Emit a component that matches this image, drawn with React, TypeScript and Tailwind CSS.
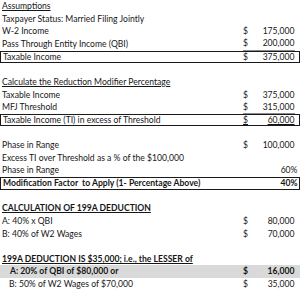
import React from "react";

type Row = {
  label?: string;
  dollar?: boolean;
  value?: string;
  pct?: boolean;
  bold?: boolean;
  underline?: boolean;
  boxed?: boolean;
  ruled?: boolean;
  textUnderline?: boolean;
  shaded?: boolean;
  indent?: string;
};

const rows: Row[] = [
  { label: "Assumptions", underline: true },
  { label: "Taxpayer Status: Married Filing Jointly" },
  { label: "W-2 Income", dollar: true, value: "175,000" },
  { label: "Pass Through Entity Income (QBI)", dollar: true, value: "200,000", ruled: true },
  { label: "Taxable Income", dollar: true, value: "375,000", boxed: true },
  {},
  { label: "Calculate the Reduction Modifier Percentage", underline: true },
  { label: "Taxable Income", dollar: true, value: "375,000" },
  { label: "MFJ Threshold", dollar: true, value: "315,000", ruled: true },
  { label: "Taxable Income (TI) in excess of Threshold", dollar: true, value: "60,000", boxed: true, textUnderline: true },
  {},
  { label: "Phase in Range", dollar: true, value: "100,000" },
  { label: "Excess TI over Threshold as a % of the $100,000" },
  { label: "Phase in Range", value: "60%", pct: true },
  { label: "Modification Factor  to Apply (1- Percentage Above)", value: "40%", pct: true, bold: true, boxed: true },
  {},
  { label: "CALCULATION OF 199A DEDUCTION", bold: true, underline: true },
  { label: "A: 40% x QBI", dollar: true, value: "80,000" },
  { label: "B: 40% of W2 Wages", dollar: true, value: "70,000" },
  {},
  { label: "199A DEDUCTION IS $35,000; i.e., the LESSER of", bold: true, underline: true },
  { label: "A: 20% of QBI of $80,000 or", dollar: true, value: "16,000", bold: true, shaded: true, indent: "pl-[10px]" },
  { label: "B: 50% of W2 Wages of $70,000", dollar: true, value: "35,000", indent: "pl-[9px]" },
];

function SheetRow({ r }: { r: Row }) {
  const base = "flex h-[12.65px] items-center whitespace-pre leading-none";
  const box = r.boxed ? " border border-[#1a1a1a]" : "";
  const shade = r.shaded ? " bg-[#d9d9d9]" : "";
  const weight = r.bold ? " font-bold" : "";
  const ul = r.textUnderline ? "underline underline-offset-[0.5px]" : "";
  return (
    <div className={base + box + shade + weight}>
      <span className={(r.indent ?? "pl-[2px]") + " flex-1" + (r.underline ? " underline underline-offset-1" : "")}>
        {r.label}
      </span>
      {r.pct ? (
        <span className={r.boxed ? "pr-[1.5px]" : "pr-[2.5px]"}>{r.value}</span>
      ) : r.value ? (
        <div
          className={
            "flex h-full w-[51.5px] items-center justify-between" +
            (r.boxed ? " mr-[4.5px]" : " mr-[5.5px]") +
            (r.ruled ? " border-b border-[#8a8a8a]" : "")
          }
        >
          <span className={ul}>{r.dollar ? "$" : ""}</span>
          <span className={ul}>{r.value}</span>
        </div>
      ) : null}
    </div>
  );
}

export default function App() {
  return (
    <div className="h-[291px] w-[300px] overflow-hidden bg-white text-[8.6px] text-[#161616] [font-family:Lato,'Liberation_Sans',sans-serif]">
      {rows.map((r, i) => (
        <SheetRow key={i} r={r} />
      ))}
    </div>
  );
}
